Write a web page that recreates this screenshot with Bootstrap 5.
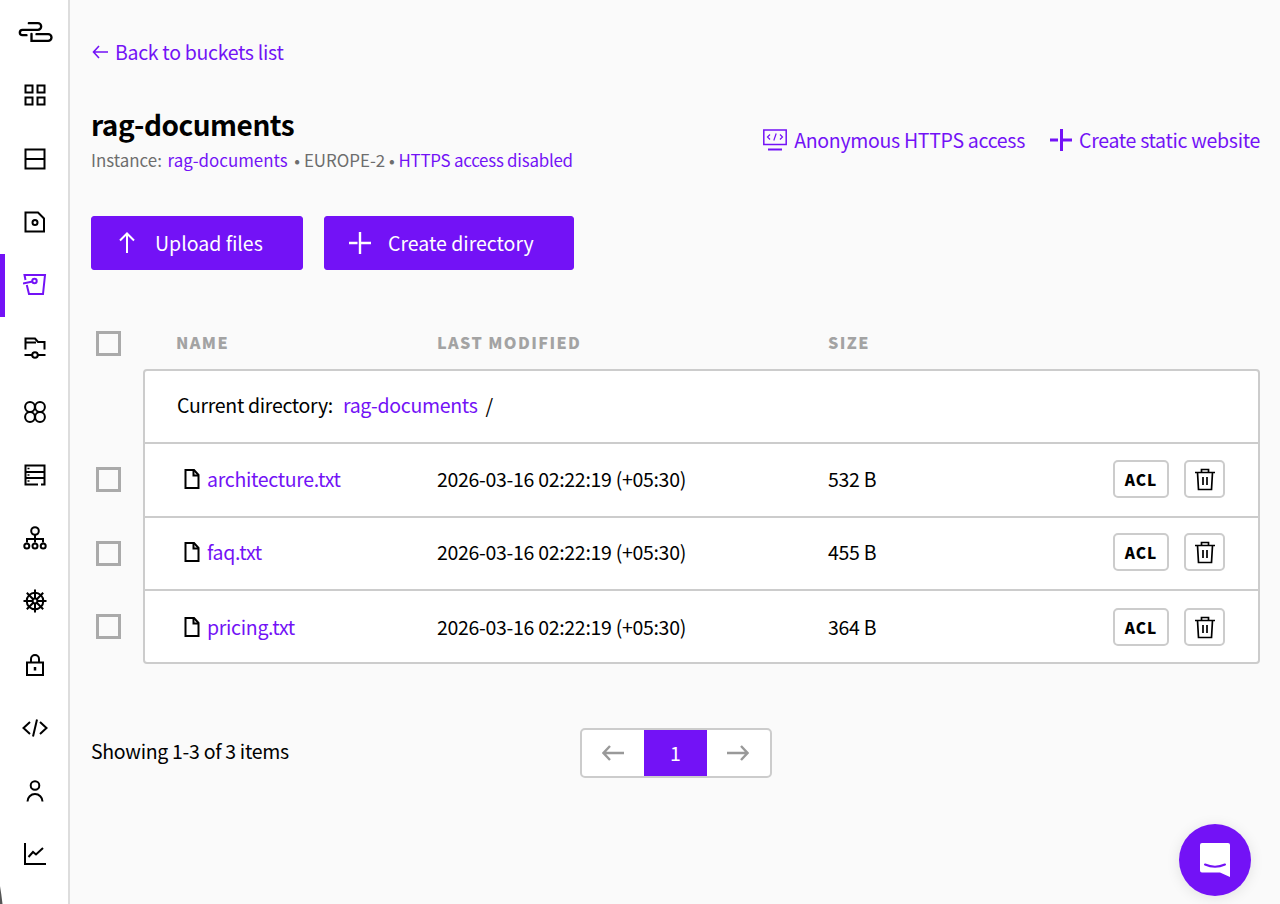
<!DOCTYPE html>
<html lang="en">
<head>
  <meta charset="UTF-8" />
  <meta name="viewport" content="width=device-width, initial-scale=1.0"/>
  <title>rag-documents</title>
  <link href="https://cdn.jsdelivr.net/npm/bootstrap@5.3.0/dist/css/bootstrap.min.css" rel="stylesheet">
  <style>
    html, body { height: 100%; }
    body {
      font-family: "Noto Sans CJK JP", "Source Sans Pro", "Noto Sans", sans-serif;
      background-color: #fafafa;
      color: #000;
      font-size: 19.5px;
      letter-spacing: -.3px;
      line-height: 26px;
      overflow: hidden;
    }
    a { color: #7312f6; text-decoration: none; }
    svg { display: block; flex-shrink: 0; }
    .app-shell { width: 1280px; height: 904px; }

    /* sidebar */
    .side-rail { width: 70px; background: #fff; border-right: 2px solid #ddd; padding-top: .5px; }
    .rail-item { height: 63.25px; width: 100%; position: relative; color: #000; padding-left: 1px; }
    .rail-item svg { fill: none; stroke: currentColor; stroke-width: 2; }
    .rail-item svg.logo-mark { stroke-width: 7; }
    .rail-item.is-active { color: #7312f6; }
    .rail-item.is-active::before { content: ""; position: absolute; left: 0; top: 0; bottom: 0; width: 5px; background: #7312f6; }

    /* main */
    .main-pane { padding: 39px 20px 0 21px; }
    .back-link { height: 26px; gap: 6px; padding-left: 1px; }
    .title-row { margin-top: 41px; height: 76px; }
    .page-title { font-size: 28px; letter-spacing: -.5px; font-weight: 700; line-height: 36px; margin: 0; }
    .sub-line { font-size: 16.9px; letter-spacing: 0; line-height: 22px; color: #6d6d6d; margin-top: 7px; }
    .sub-instance { margin: 0 3px 0 2px; }
    .sub-https { letter-spacing: -.24px; }
    .top-actions { padding-top: 3px; gap: 25px; }
    .top-action { height: 26px; margin-top: 18px; gap: 7px; }
    .top-action svg { fill: none; stroke: currentColor; }
    .btn-bucket {
      --bs-btn-bg: #7312f6; --bs-btn-border-color: #7312f6; --bs-btn-color: #fff;
      --bs-btn-hover-bg: #7312f6; --bs-btn-hover-border-color: #7312f6; --bs-btn-hover-color: #fff;
      height: 54px; border-radius: 3px; font-size: 19.5px; letter-spacing: 0; padding: 0 0 1px;
    }
    .btn-upload { width: 212px; padding-left: 24px; gap: 17px; }
    .btn-create { width: 250px; padding-left: 24px; gap: 17px; }
    .btn-bucket svg { stroke: #fff; fill: none; }
    .action-row { margin-top: 34px; gap: 21px; }

    /* file table */
    .file-area { margin-top: 61px; }
    .check-col { width: 52px; }
    .check-box { width: 25px; height: 25px; border: 3px solid #aaa; margin-left: 5px; display: block; }
    .head-row { height: 37.5px; }
    .head-cols { padding-left: 33px; }
    .head-cell { font-size: 16.200px; font-weight: 900; letter-spacing: 1.400px; color: #a3a3a3; position: relative; top: -2px; }
    .col-name { width: 261px; }
    .col-date { width: 391px; }
    .files-box { width: 1117px; background: #fff; border: 2px solid #ccc; border-radius: 4px; }
    .dir-line { height: 73.5px; padding: 0 0 3px 32px; border-bottom: 2px solid #ccc; }
    .dir-label { margin-right: 10px; }
    .file-row { height: 73.5px; border-bottom: 2px solid #ccc; padding: 0 0 2px 39px; }
    .file-row:last-child { border-bottom: 0; height: 71px; padding-bottom: 0; }
    .file-name { width: 253px; gap: 7px; }
    .icon-btn { background: #fff; border: 2px solid #ccc; border-radius: 5px; height: 38px; color: #000; }
    .acl-btn { width: 56px; font-size: 15.5px; font-weight: 900; letter-spacing: 1px; padding: 0; }
    .trash-btn { width: 41px; margin: 0 33px 0 15px; }
    .trash-btn svg { fill: none; stroke: #000; stroke-width: 1.7; }
    .check-cell { height: 73.4px; }
    .check-top { height: 74.5px; }

    /* pagination */
    .pager-row { margin-top: 64px; height: 50px; }
    .pager-text { margin-bottom: 4px; }
    .pager-box { width: 192px; height: 50px; background: #fff; border: 2px solid #ccc; border-radius: 5px; margin-left: 291px; overflow: hidden; }
    .pager-cell { width: 63px; height: 100%; color: #999; }
    .pager-cell:first-child { width: 62px; }
    .pager-cell svg { fill: none; stroke: #999; stroke-width: 2.4; }
    .pager-cell.is-current { background: #7312f6; color: #fff; }

    .chat-bubble { position: fixed; left: 1179px; top: 824px; width: 72px; height: 72px; border-radius: 50%; background: #7312f6; box-shadow: 0 2px 14px rgba(0,0,0,.1); }
    .corner-mark { position: fixed; left: 0; top: 886px; }
  </style>
</head>
<body>

<div class="app-shell d-flex">
  <!-- Sidebar -->
  <nav class="side-rail d-flex flex-column flex-shrink-0">
    <a class="rail-item d-flex align-items-center justify-content-center" href="#">
      <svg class="logo-mark" width="40" height="25" viewBox="43.500 58.500 120 75"><path d="M85 68H112a10 10 0 0 1 0 20H66a8 8 0 0 0 0 16H78" stroke-linecap="round"/><path d="M93 100V121H143a9.500 9.500 0 0 0 0-20H108" stroke-linecap="round"/></svg>
    </a>
    <a class="rail-item d-flex align-items-center justify-content-center" href="#">
      <svg width="24" height="24" viewBox="0 0 24 24"><rect x="2.500" y="2.500" width="7" height="7"/><rect x="14.500" y="2.500" width="7" height="7"/><rect x="2.500" y="14.500" width="7" height="7"/><rect x="14.500" y="14.500" width="7" height="7"/></svg>
    </a>
    <a class="rail-item d-flex align-items-center justify-content-center" href="#">
      <svg width="24" height="24" viewBox="0 0 24 24"><rect x="2.500" y="2.500" width="19" height="19"/><path d="M2 12H22"/></svg>
    </a>
    <a class="rail-item d-flex align-items-center justify-content-center" href="#">
      <svg width="24" height="24" viewBox="0 0 24 24"><path d="M2.500 2.500H15L21 8.500V21.500H2.500Z"/><circle cx="12" cy="12.500" r="2.500"/></svg>
    </a>
    <a class="rail-item is-active d-flex align-items-center justify-content-center" href="#">
      <svg width="24" height="24" viewBox="0 0 24 24"><path d="M2.500 7L1.500 2H22L20 21H6L3.800 12"/><path d="M0 10.500L9.500 8.500"/><circle cx="11.500" cy="8" r="2.200"/></svg>
    </a>
    <a class="rail-item d-flex align-items-center justify-content-center" href="#">
      <svg width="24" height="24" viewBox="0 0 24 24"><path d="M2.500 13.500V2.500H12L15 6H21.500V13.500"/><path d="M2.500 6.500H13"/><path d="M1.500 19H9M15 19H22.500"/><circle cx="12" cy="19" r="2.800"/></svg>
    </a>
    <a class="rail-item d-flex align-items-center justify-content-center" href="#">
      <svg width="24" height="24" viewBox="0 0 24 24"><circle cx="7" cy="7" r="4.900"/><circle cx="17" cy="7" r="4.900"/><circle cx="7" cy="17" r="4.900"/><circle cx="17" cy="17" r="4.900"/></svg>
    </a>
    <a class="rail-item d-flex align-items-center justify-content-center" href="#">
      <svg width="24" height="24" viewBox="0 0 24 24"><path d="M18 21.500H21.500V2.500H2.500V21.500H15"/><path d="M2.500 9H21.500M2.500 15H21.500"/><path d="M4.500 5.500H6.500M4.500 12H6.500M4.500 18H6.500" stroke-width="1.500"/></svg>
    </a>
    <a class="rail-item d-flex align-items-center justify-content-center" href="#">
      <svg width="24" height="24" viewBox="0 0 24 24"><circle cx="12" cy="5" r="3.800"/><path d="M12 9V16.500M4 16.500V13H20V16.500"/><circle cx="3.800" cy="20" r="2.500"/><circle cx="12" cy="20" r="2.500"/><circle cx="20.200" cy="20" r="2.500"/></svg>
    </a>
    <a class="rail-item d-flex align-items-center justify-content-center" href="#">
      <svg width="24" height="24" viewBox="0 0 24 24"><circle cx="12" cy="12" r="8.300"/><circle cx="12" cy="12" r="2.400"/><path d="M12 .5V9.500M12 14.500V23.500M.5 12H9.500M14.500 12H23.500M3.800 3.800L10.200 10.200M13.800 13.800L20.200 20.200M20.200 3.800L13.800 10.200M10.200 13.800L3.800 20.200"/></svg>
    </a>
    <a class="rail-item d-flex align-items-center justify-content-center" href="#">
      <svg width="24" height="24" viewBox="0 0 24 24"><rect x="4" y="9.500" width="16" height="12.500"/><path d="M8 9.500V6a4 4 0 0 1 8 0V9.500"/><path d="M12 14V17.500" stroke-width="2.500"/></svg>
    </a>
    <a class="rail-item d-flex align-items-center justify-content-center" href="#">
      <svg width="26" height="24" viewBox="0 0 26 24"><path d="M8 6L1.500 12L8 18M18 6L24.500 12L18 18M15 3.500L11 20.500"/></svg>
    </a>
    <a class="rail-item d-flex align-items-center justify-content-center" href="#">
      <svg width="24" height="24" viewBox="0 0 24 24"><circle cx="12" cy="6.500" r="4.300"/><path d="M4.500 22.500a7.500 7.500 0 0 1 15 0"/></svg>
    </a>
    <a class="rail-item d-flex align-items-center justify-content-center" href="#">
      <svg width="24" height="24" viewBox="0 0 24 24"><path d="M2 1V22H23"/><path d="M5.500 15L10 10L13 12.500L20 6"/></svg>
    </a>
  </nav>

  <!-- Main -->
  <main class="main-pane flex-grow-1">
    <a class="back-link d-flex align-items-center" href="#">
      <svg width="17" height="14" viewBox="0 0 17 14" fill="none" stroke="currentColor" stroke-width="1.600"><path d="M7 1L1.500 7L7 13M1.500 7H16"/></svg>
      <span>Back to buckets list</span>
    </a>

    <div class="title-row d-flex justify-content-between">
      <div>
        <h1 class="page-title">rag-documents</h1>
        <div class="sub-line">Instance: <a class="sub-instance" href="#">rag-documents</a> • EUROPE-2 • <a class="sub-https" href="#">HTTPS access disabled</a></div>
      </div>
      <div class="top-actions d-flex">
        <a class="top-action d-flex align-items-center" href="#">
          <svg width="24" height="22" viewBox="0 0 24 22" stroke-width="1.500"><rect x=".8" y="1" width="22.400" height="14.500"/><path d="M5 20.500H19" stroke-width="2"/><path d="M7 5.500L4.500 8L7 10.500M17 5.500L19.500 8L17 10.500M13.200 4.500L10.800 11.500" stroke-width="1.200"/></svg>
          <span>Anonymous HTTPS access</span>
        </a>
        <a class="top-action d-flex align-items-center" href="#">
          <svg width="22" height="22" viewBox="0 0 22 22" stroke-width="3"><path d="M0 11H8M10 11H22M11.500 0V22"/></svg>
          <span>Create static website</span>
        </a>
      </div>
    </div>

    <div class="action-row d-flex">
      <button type="button" class="btn btn-bucket btn-upload d-flex align-items-center">
        <svg width="22" height="22" viewBox="0 0 22 22" stroke-width="2"><path d="M4 8.500L11 1.500L18 8.500M11 1.500V21"/></svg>
        <span>Upload files</span>
      </button>
      <button type="button" class="btn btn-bucket btn-create d-flex align-items-center">
        <svg width="22" height="22" viewBox="0 0 22 22" stroke-width="2.400"><path d="M0 11H8.500M10.500 11H22M11 0V22"/></svg>
        <span>Create directory</span>
      </button>
    </div>

    <div class="file-area d-flex">
      <div class="check-col flex-shrink-0">
        <div class="head-row"><span class="check-box"></span></div>
        <div class="check-top"></div>
        <div class="check-cell d-flex align-items-center"><span class="check-box"></span></div>
        <div class="check-cell d-flex align-items-center"><span class="check-box"></span></div>
        <div class="check-cell d-flex align-items-center"><span class="check-box"></span></div>
      </div>
      <div>
        <div class="head-row head-cols d-flex">
          <div class="head-cell col-name">NAME</div>
          <div class="head-cell col-date">LAST MODIFIED</div>
          <div class="head-cell">SIZE</div>
        </div>
        <div class="files-box">
          <div class="dir-line d-flex align-items-center">
            <span class="dir-label">Current directory:</span>
            <a href="#">rag-documents</a>
            <span class="ms-2">/</span>
          </div>
          <div class="file-row d-flex align-items-center">
            <div class="file-name d-flex align-items-center"><svg width="16" height="20" viewBox="0 0 16 20" fill="none" stroke="#000" stroke-width="2"><path d="M1.500 1H10L14.500 6V19H1.500Z"/><path d="M9.500 1.500V6.500H14"/></svg><a href="#">architecture.txt</a></div>
            <div class="col-date">2026-03-16 02:22:19 (+05:30)</div>
            <div class="flex-grow-1">532 B</div>
            <button type="button" class="icon-btn acl-btn">ACL</button>
            <button type="button" class="icon-btn trash-btn d-flex align-items-center justify-content-center p-0"><svg width="22" height="24" viewBox="0 0 22 24"><path d="M1 5.500H21M7.500 5.500V2.500H14.500V5.500M3.500 5.500L4.500 22.500H17.500L18.500 5.500M9 10V18M13 10V18"/></svg></button>
          </div>
          <div class="file-row d-flex align-items-center">
            <div class="file-name d-flex align-items-center"><svg width="16" height="20" viewBox="0 0 16 20" fill="none" stroke="#000" stroke-width="2"><path d="M1.500 1H10L14.500 6V19H1.500Z"/><path d="M9.500 1.500V6.500H14"/></svg><a href="#">faq.txt</a></div>
            <div class="col-date">2026-03-16 02:22:19 (+05:30)</div>
            <div class="flex-grow-1">455 B</div>
            <button type="button" class="icon-btn acl-btn">ACL</button>
            <button type="button" class="icon-btn trash-btn d-flex align-items-center justify-content-center p-0"><svg width="22" height="24" viewBox="0 0 22 24"><path d="M1 5.500H21M7.500 5.500V2.500H14.500V5.500M3.500 5.500L4.500 22.500H17.500L18.500 5.500M9 10V18M13 10V18"/></svg></button>
          </div>
          <div class="file-row d-flex align-items-center">
            <div class="file-name d-flex align-items-center"><svg width="16" height="20" viewBox="0 0 16 20" fill="none" stroke="#000" stroke-width="2"><path d="M1.500 1H10L14.500 6V19H1.500Z"/><path d="M9.500 1.500V6.500H14"/></svg><a href="#">pricing.txt</a></div>
            <div class="col-date">2026-03-16 02:22:19 (+05:30)</div>
            <div class="flex-grow-1">364 B</div>
            <button type="button" class="icon-btn acl-btn">ACL</button>
            <button type="button" class="icon-btn trash-btn d-flex align-items-center justify-content-center p-0"><svg width="22" height="24" viewBox="0 0 22 24"><path d="M1 5.500H21M7.500 5.500V2.500H14.500V5.500M3.500 5.500L4.500 22.500H17.500L18.500 5.500M9 10V18M13 10V18"/></svg></button>
          </div>
        </div>
      </div>
    </div>

    <div class="pager-row d-flex align-items-center">
      <span class="pager-text">Showing 1-3 of 3 items</span>
      <div class="pager-box d-flex">
        <div class="pager-cell d-flex align-items-center justify-content-center"><svg width="22" height="16" viewBox="0 0 22 16"><path d="M8 1L1.500 8L8 15M1.500 8H22"/></svg></div>
        <div class="pager-cell is-current d-flex align-items-center justify-content-center">1</div>
        <div class="pager-cell d-flex align-items-center justify-content-center"><svg width="22" height="16" viewBox="0 0 22 16"><path d="M14 1L20.500 8L14 15M20.500 8H0"/></svg></div>
      </div>
    </div>
  </main>
</div>

<a class="chat-bubble d-flex align-items-center justify-content-center" href="#">
  <svg width="32" height="36" viewBox="0 0 32 36"><path d="M3 1H29a2 2 0 0 1 2 2V35L21 30.500H3a2 2 0 0 1-2-2V3a2 2 0 0 1 2-2Z" fill="#fff"/><path d="M6 22.500Q16 27 26 22.500" fill="none" stroke="#7312f6" stroke-width="2" stroke-linecap="round"/></svg>
</a>
<svg class="corner-mark" width="3" height="18" viewBox="0 0 3 18"><path d="M0 0Q1.500 9 2.500 18H0Z" fill="#555"/></svg>

<script src="https://cdn.jsdelivr.net/npm/bootstrap@5.3.0/dist/js/bootstrap.bundle.min.js"></script>
</body>
</html>
